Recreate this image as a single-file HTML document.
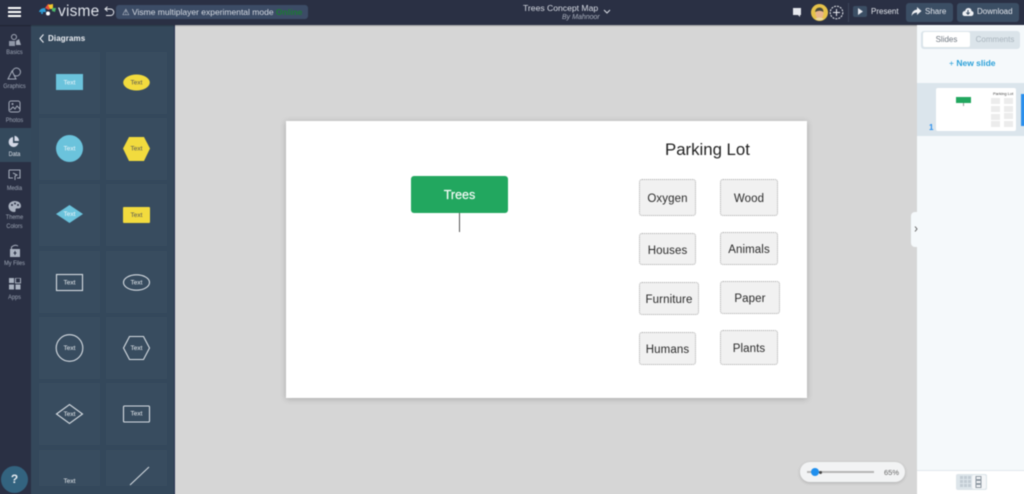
<!DOCTYPE html>
<html><head><meta charset="utf-8"><title>Trees Concept Map</title>
<style>
html,body{margin:0;padding:0;width:1024px;height:494px;overflow:hidden;background:#d6d6d6}
body{position:relative;font-family:"Liberation Sans",sans-serif}
#r{position:absolute;left:0;top:0;width:1024px;height:494px;filter:blur(.45px)}
#r div,#r svg,#r span.a{position:absolute}
.t{white-space:nowrap;line-height:1}
.cell{background:#384c5f;width:61px;height:62px}
.rail{left:-1px;width:31px;text-align:center;color:#9ea6b5;font-size:6.5px;line-height:8.5px;transform:scaleX(.86)}
.st{position:absolute;background:#f1f1f1;border:1px dotted #aaa;border-radius:3px;box-sizing:border-box;color:#2a2a2a;font-size:11.5px;letter-spacing:.1px;display:flex;align-items:center;justify-content:center;padding-top:2px}
.mini{background:#ececec;width:9px;height:6px}
</style></head><body><div id="r">

<div style="left:-6px;top:25px;width:37px;height:475px;background:#2a3044"></div>
<div style="left:-6px;top:128px;width:37px;height:34px;background:#34495c"></div>
<div style="left:31px;top:25px;width:144px;height:475px;background:#34485b"></div>
<div style="left:174px;top:25px;width:1px;height:475px;background:#26304f"></div>
<div style="left:175px;top:25px;width:742px;height:475px;background:#d6d6d6"></div>

<!-- top bar -->
<div style="left:-6px;top:-6px;width:1036px;height:31px;background:#2a3044;box-shadow:0 1px 1px rgba(0,0,0,.25)"></div>
<div style="left:8px;top:7px;width:13px;height:2px;background:#fff"></div>
<div style="left:8px;top:11px;width:13px;height:2px;background:#fff"></div>
<div style="left:8px;top:15px;width:13px;height:2px;background:#fff"></div>
<svg style="left:38px;top:3px" width="19" height="14" viewBox="0 0 19 14"><path d="M1 9 Q2 5 7 5 L8 9Z" fill="#2f9fd8"/><path d="M7 5 L10 1 L14 2 L11 7Z" fill="#e8503a"/><path d="M10 2 L15 1 L15 6 L12 6Z" fill="#f2c92e"/><path d="M14 5 L18 5 L17 9 L14 8Z" fill="#4cb76a"/><circle cx="10" cy="10.500" r="2" fill="#fff"/><circle cx="4" cy="10" r="1" fill="#2f9fd8"/></svg>
<div class="t" style="left:58px;top:3.500px;font-size:15.500px;color:#dfe3ea;letter-spacing:.2px">visme</div>
<svg style="left:103px;top:6px" width="12" height="12" viewBox="0 0 12 12"><path d="M3 3 H7.500 A3.200 3.200 0 0 1 7.500 9.500 H3 M4.500 .8 L2 3 L4.500 5.200" fill="none" stroke="#e6e8ee" stroke-width="1"/></svg>
<div style="left:116px;top:5px;width:192px;height:14px;background:#3c4c66;border-radius:3px"></div>
<div class="t" style="left:122px;top:8px;font-size:8.500px;color:#d5dae2">⚠ Visme multiplayer experimental mode <span style="color:#1b7a34;font-weight:bold">Online</span></div>
<div class="t" style="left:523px;top:4px;font-size:8.600px;color:#d8dce4">Trees Concept Map</div>
<div class="t" style="left:562px;top:14px;font-size:7px;font-style:italic;color:#a9afbc">By Mahnoor</div>
<svg style="left:603px;top:9px" width="8" height="6" viewBox="0 0 8 6"><path d="M1 1 L4 4 L7 1" fill="none" stroke="#d8dce4" stroke-width="1"/></svg>
<svg style="left:792px;top:7px" width="11" height="11" viewBox="0 0 11 11"><path d="M1 1 H9 V8 H8 V10 L6 8 H1Z" fill="#e6e8ee"/></svg>
<svg style="left:809.500px;top:3px" width="19" height="19" viewBox="0 0 19 19"><circle cx="9.500" cy="9.500" r="8.500" fill="#e6c24a"/><ellipse cx="9.500" cy="10.500" rx="4" ry="5.500" fill="#e8b48c"/><path d="M5 9 Q5.500 4.500 10 4.500 Q13.500 5 13.500 9 Q10 6.500 5 9Z" fill="#4a4a3a"/><path d="M5 16 Q9.500 13 14 16 Q9.500 19 5 16Z" fill="#e9d9a0"/></svg>
<svg style="left:829px;top:5px" width="15" height="15" viewBox="0 0 15 15"><circle cx="7.500" cy="7.500" r="6.300" fill="none" stroke="#e6e8ee" stroke-width="1" stroke-dasharray="2 1"/><path d="M7.500 4 V11 M4 7.500 H11" stroke="#e6e8ee" stroke-width="1"/></svg>
<div style="left:848px;top:3px;width:1px;height:19px;background:#3c4459"></div>
<div style="left:853px;top:6px;width:14px;height:11px;background:#3b4e64;border-radius:2px"></div>
<svg style="left:857px;top:8px" width="7" height="8" viewBox="0 0 7 8"><path d="M1 0 L6 3.500 L1 7Z" fill="#e6e8ee"/></svg>
<div class="t" style="left:871px;top:8px;font-size:8px;color:#e3e6ec">Present</div>
<div style="left:906px;top:3px;width:47px;height:19px;background:#3b4e64;border-radius:3px"></div>
<svg style="left:911px;top:7px" width="11" height="10" viewBox="0 0 11 10"><path d="M6 0 L10.500 4 L6 8 V5.500 Q2.500 5.500 .5 9 Q1 3 6 2.500Z" fill="#eef0f4"/></svg>
<div class="t" style="left:925px;top:8px;font-size:8px;color:#e3e6ec">Share</div>
<div style="left:957px;top:3px;width:62px;height:19px;background:#3b4e64;border-radius:3px"></div>
<svg style="left:962px;top:7px" width="12" height="10" viewBox="0 0 12 10"><path d="M3 9 Q0 9 .5 6 Q1 4 3 4 Q4 .5 7 1 Q9.500 1.500 9.500 4 Q12 4.500 11.500 7 Q11 9 9 9Z" fill="#eef0f4"/><path d="M6 3 V7 M4.300 5.500 L6 7.300 L7.700 5.500" stroke="#3b4e64" fill="none" stroke-width="1"/></svg>
<div class="t" style="left:977px;top:8px;font-size:8px;color:#e3e6ec">Download</div>

<!-- rail -->
<svg style="left:8px;top:33px" width="14" height="14" viewBox="0 0 14 14"><rect x="1" y="8" width="6" height="5" fill="#8e96a6"/><circle cx="6" cy="4" r="2.500" fill="none" stroke="#a3aab8"/><path d="M8 8 L11 6 L13 12 H8Z" fill="#a3aab8"/></svg>
<div class="rail t" style="top:49px">Basics</div>
<svg style="left:7px;top:67px" width="15" height="14" viewBox="0 0 15 14"><circle cx="9.500" cy="5" r="4" fill="none" stroke="#a3aab8"/><path d="M5 4 L9 12 H1Z" fill="#2a3044" stroke="#a3aab8"/></svg>
<div class="rail t" style="top:83px">Graphics</div>
<svg style="left:8px;top:100px" width="14" height="13" viewBox="0 0 14 13"><rect x="1" y="1" width="11" height="11" rx="2" fill="none" stroke="#a3aab8"/><path d="M2 10 L5 7 L7 9 L9 6 L12 9" fill="none" stroke="#a3aab8"/><circle cx="4.500" cy="4" r="1" fill="#a3aab8"/></svg>
<div class="rail t" style="top:117px">Photos</div>
<svg style="left:8px;top:135px" width="12" height="13" viewBox="0 0 12 13"><path d="M5 2 A5 5 0 1 0 10.500 8 H5Z" fill="#d3d8e6"/><path d="M6.500 .8 A5 5 0 0 1 11 6 H6.500Z" fill="#d3d8e6"/></svg>
<div class="rail t" style="top:151px;color:#dfe3ea">Data</div>
<svg style="left:8px;top:169px" width="14" height="14" viewBox="0 0 14 14"><path d="M1 1 H12 V9 H9 M1 1 V9 H5" fill="none" stroke="#a3aab8" stroke-width="1.100"/><path d="M5 4 L9 6 L7 7 V11" fill="none" stroke="#a3aab8"/></svg>
<div class="rail t" style="top:185px">Media</div>
<svg style="left:8px;top:200px" width="14" height="13" viewBox="0 0 14 13"><path d="M7 1 A6 5.500 0 1 0 6 12 Q8 12 7.500 10 Q7.500 8 10 8.500 Q13 8.500 13 6 Q12.500 1 7 1Z" fill="#aab2c0"/><circle cx="4" cy="5" r="1" fill="#2a3044"/><circle cx="7" cy="3.500" r="1" fill="#2a3044"/><circle cx="10" cy="5" r="1" fill="#2a3044"/></svg>
<div class="rail" style="top:214px">Theme<br>Colors</div>
<svg style="left:9px;top:244px" width="12" height="14" viewBox="0 0 12 14"><path d="M1 5 H11 V13 H1Z" fill="#aab2c0"/><path d="M2.500 5 V3 Q6 0 9 2" fill="none" stroke="#aab2c0"/><path d="M6 7 V11 M4.500 9 H7.500" stroke="#2a3044"/></svg>
<div class="rail t" style="top:260px">My Files</div>
<svg style="left:9px;top:278px" width="12" height="12" viewBox="0 0 12 12"><rect x="0" y="0" width="5" height="5" fill="#aab2c0"/><rect x="6.500" y="0" width="5" height="5" fill="none" stroke="#aab2c0"/><rect x="0" y="6.500" width="5" height="5" fill="#aab2c0"/><rect x="6.500" y="6.500" width="5" height="5" fill="#aab2c0"/></svg>
<div class="rail t" style="top:294px">Apps</div>
<div style="left:1px;top:466px;width:27px;height:27px;border-radius:50%;background:#33637f"></div>
<div class="t" style="left:1px;top:473px;width:27px;text-align:center;color:#e6ebf0;font-weight:bold;font-size:12px">?</div>

<!-- panel -->
<svg style="left:38px;top:33px" width="7" height="11" viewBox="0 0 7 11"><path d="M5.500 1.500 L2 5.500 L5.500 9.500" fill="none" stroke="#eef0f4" stroke-width="1.100"/></svg>
<div class="t" style="left:48px;top:34.500px;font-size:8px;font-weight:bold;color:#eef0f4;letter-spacing:.1px">Diagrams</div>

<div class="cell" style="left:39px;top:52px"></div><div class="cell" style="left:106px;top:52px"></div>
<div class="cell" style="left:39px;top:118px"></div><div class="cell" style="left:106px;top:118px"></div>
<div class="cell" style="left:39px;top:184px"></div><div class="cell" style="left:106px;top:184px"></div>
<div class="cell" style="left:39px;top:251px"></div><div class="cell" style="left:106px;top:251px"></div>
<div class="cell" style="left:39px;top:317px"></div><div class="cell" style="left:106px;top:317px"></div>
<div class="cell" style="left:39px;top:383px"></div><div class="cell" style="left:106px;top:383px"></div>
<div class="cell" style="left:39px;top:450px;height:36px"></div><div class="cell" style="left:106px;top:450px;height:36px"></div>

<svg style="left:31px;top:25px" width="144" height="469" viewBox="0 0 144 469" font-family="Liberation Sans" font-size="6.500" text-anchor="middle">
<rect x="25" y="49" width="27" height="16" fill="#6bc3dc"/><text x="38.500" y="59.500" fill="#eef6fa">Text</text>
<ellipse cx="105.500" cy="57.500" rx="13.300" ry="8" fill="#f2db3e"/><text x="105.500" y="59.500" fill="#555">Text</text>
<circle cx="38.500" cy="123.500" r="13.500" fill="#6bc3dc"/><text x="38.500" y="125.500" fill="#eef6fa">Text</text>
<path d="M92 123.500 L98 112 H113 L119 123.500 L113 136 H98Z" fill="#f2db3e"/><text x="105.500" y="125.500" fill="#555">Text</text>
<path d="M25 189 L38.500 180 L52 189 L38.500 198Z" fill="#6bc3dc"/><text x="38.500" y="191" fill="#eef6fa">Text</text>
<rect x="92" y="182" width="27" height="16" rx="1" fill="#f2db3e"/><text x="105.500" y="192" fill="#555">Text</text>
<g fill="none" stroke="#d7dde3" stroke-width="1.100"><rect x="25.500" y="249.500" width="26" height="16"/>
<ellipse cx="105.500" cy="257.500" rx="13" ry="7.700"/>
<circle cx="38.500" cy="323" r="13.300"/>
<path d="M92.500 323 L98.500 311.500 H112.500 L118.500 323 L112.500 334.500 H98.500Z"/>
<path d="M25.500 389 L38.500 379.500 L51.500 389 L38.500 398.500Z"/>
<rect x="92.500" y="381" width="26" height="16" rx="1"/></g>
<path d="M99 460 L118 442" stroke="#d7dde3" stroke-width="1"/>
<g fill="#e8ecf0"><text x="38.500" y="259.500">Text</text><text x="105.500" y="259.500">Text</text><text x="38.500" y="325">Text</text><text x="105.500" y="325">Text</text><text x="38.500" y="391">Text</text><text x="105.500" y="390.500">Text</text><text x="38.500" y="458">Text</text></g>
</svg>

<!-- slide -->
<div style="left:286px;top:121px;width:521px;height:277px;background:#fff;box-shadow:0 1px 6px rgba(0,0,0,.22)"></div>
<div style="left:411px;top:176px;width:97px;height:37px;background:#22a75f;border-radius:3px"></div>
<div class="t" style="left:411px;top:189px;width:97px;text-align:center;color:#f8fdf9;font-size:12.500px;-webkit-text-stroke:.2px #f8fdf9">Trees</div>
<div style="left:459px;top:213px;width:1px;height:19px;background:#555"></div>
<div class="t" style="left:665px;top:141.500px;font-size:16.800px;color:#222">Parking Lot</div>
<div class="st" style="left:639px;top:179px;width:57px;height:37px">Oxygen</div>
<div class="st" style="left:720px;top:179px;width:58px;height:37px">Wood</div>
<div class="st" style="left:639px;top:233px;width:57px;height:32px;padding-top:3px">Houses</div>
<div class="st" style="left:720px;top:232px;width:58px;height:33px">Animals</div>
<div class="st" style="left:639px;top:282px;width:60px;height:33px;padding-top:3px">Furniture</div>
<div class="st" style="left:720px;top:281px;width:60px;height:33px">Paper</div>
<div class="st" style="left:639px;top:332px;width:57px;height:33px">Humans</div>
<div class="st" style="left:720px;top:330px;width:58px;height:35px">Plants</div>

<!-- zoom -->
<div style="left:800px;top:462px;width:105px;height:20px;background:#f2f3f4;border-radius:10px;box-shadow:0 1px 3px rgba(0,0,0,.18)"></div>
<div style="left:807px;top:471px;width:67px;height:1.500px;background:#b5b5b5"></div>
<div style="left:811px;top:468px;width:8px;height:8px;border-radius:50%;background:#1f8fee"></div>
<div style="left:819px;top:470.500px;width:3px;height:3px;background:#444;border-radius:50%"></div>
<div class="t" style="left:884px;top:468.500px;font-size:7.500px;color:#666">65%</div>

<!-- right panel -->
<div style="left:917px;top:25px;width:113px;height:475px;background:#f5f9fb"></div>
<div style="left:911px;top:212px;width:7px;height:35px;background:#f5f9fb;border-radius:4px 0 0 4px"></div>
<svg style="left:914px;top:226px" width="4" height="6" viewBox="0 0 4 6"><path d="M1 .5 L3 3 L1 5.500" fill="none" stroke="#666" stroke-width="1"/></svg>
<div style="left:921px;top:31px;width:99px;height:18px;background:#dbe4ea;border-radius:3px"></div>
<div style="left:923px;top:32px;width:47px;height:15px;background:#fff;border-radius:2px"></div>
<div class="t" style="left:923px;top:35.500px;width:47px;text-align:center;font-size:8px;color:#6f7780">Slides</div>
<div class="t" style="left:971px;top:35.500px;width:48px;text-align:center;font-size:8px;color:#a9b4bd">Comments</div>
<div class="t" style="left:949px;top:59px;font-size:8.500px;color:#2aa0d8;font-weight:bold"><span style="font-weight:normal">+</span> New slide</div>
<div style="left:917px;top:83px;width:113px;height:53px;background:#dbe5ec"></div>
<div style="left:936px;top:88px;width:80px;height:43px;background:#fff;border-radius:2px"></div>
<div style="left:1021px;top:94px;width:9px;height:32px;background:#2b8fec"></div>
<div class="t" style="left:929px;top:123.500px;font-size:8px;font-weight:bold;color:#2b8fec">1</div>
<div style="left:956px;top:97px;width:15px;height:6px;background:#22a75f"></div>
<div style="left:963px;top:103px;width:.5px;height:3px;background:#999"></div>
<div class="t" style="left:993px;top:92px;font-size:4px;color:#444">Parking Lot</div>
<div class="mini" style="left:991px;top:98px"></div><div class="mini" style="left:1004px;top:98px"></div>
<div class="mini" style="left:991px;top:106px"></div><div class="mini" style="left:1004px;top:106px"></div>
<div class="mini" style="left:991px;top:114px"></div><div class="mini" style="left:1004px;top:113px"></div>
<div class="mini" style="left:991px;top:121px"></div><div class="mini" style="left:1004px;top:121px"></div>
<div style="left:917px;top:470px;width:113px;height:30px;background:#fff;border-top:1px solid #e2e8ec;box-sizing:border-box"></div>
<div style="left:956px;top:474px;width:31px;height:16px;background:#dde5ea;border-radius:2px"></div>
<div style="left:972px;top:475px;width:14px;height:14px;background:#f4f6f8;border-radius:2px"></div>
<svg style="left:960px;top:476px" width="12" height="12" viewBox="0 0 12 12" fill="#c2ccd4"><rect x="0" y="0" width="3" height="3"/><rect x="4" y="0" width="3" height="3"/><rect x="8" y="0" width="3" height="3"/><rect x="0" y="4" width="3" height="3"/><rect x="4" y="4" width="3" height="3"/><rect x="8" y="4" width="3" height="3"/><rect x="0" y="8" width="3" height="3"/><rect x="4" y="8" width="3" height="3"/><rect x="8" y="8" width="3" height="3"/></svg>
<svg style="left:975px;top:476px" width="8" height="12" viewBox="0 0 8 12" fill="none" stroke="#8f99a3"><rect x="1" y=".5" width="5" height="3"/><rect x="1" y="4.500" width="5" height="3"/><rect x="1" y="8.500" width="5" height="3"/></svg>
</div></body></html>
